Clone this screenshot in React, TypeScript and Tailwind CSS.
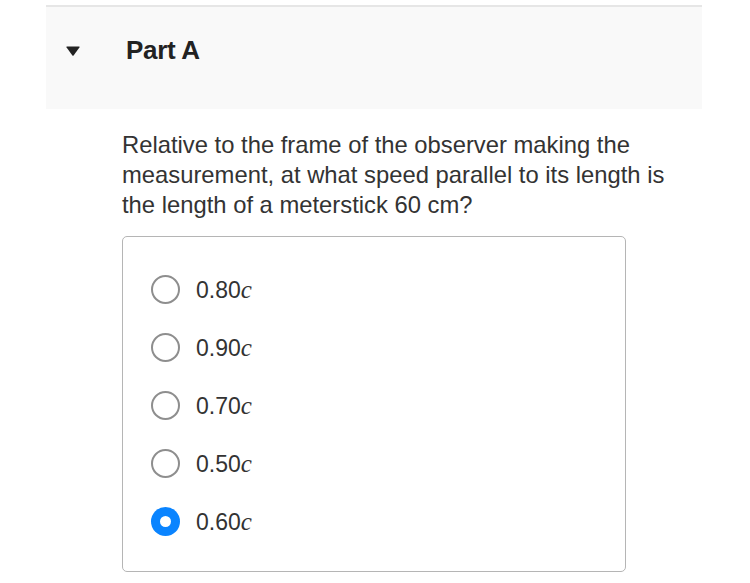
import React from 'react';

const options = ['0.80', '0.90', '0.70', '0.50', '0.60'];
const selected = 4;

function Radio({ checked }: { checked: boolean }) {
  if (checked) {
    return (
      <span className="flex h-[29px] w-[29px] shrink-0 items-center justify-center rounded-full bg-[#0a84ff]">
        <span className="h-[11px] w-[11px] rounded-full bg-white" />
      </span>
    );
  }
  return <span className="h-[29px] w-[29px] shrink-0 rounded-full border-[2.5px] border-[#8e8e8e] bg-white" />;
}

export default function App() {
  return (
    <div className="h-[583px] w-[750px] bg-white pt-[5px] text-[#222] [font-family:'Liberation_Sans',Arial,sans-serif]">
      <div className="ml-[46px] mr-[48px] border-t-2 border-[#e6e6e6] bg-[#f9f9f9]">
        <div className="flex h-[102px] items-center pb-[15px]">
          <svg className="ml-[20px] h-[10px] w-[14px]" viewBox="0 0 14 10">
            <path d="M1 0.5 H13 Q14 0.5 13.4 1.4 L7.6 9.4 Q7 10 6.4 9.4 L0.6 1.4 Q0 0.5 1 0.5 Z" fill="#222" />
          </svg>
          <span className="ml-[46px] text-[26px] font-bold tracking-[-0.3px]">Part A</span>
        </div>
      </div>

      <div className="ml-[122px] mt-[21px] w-[560px] text-[23.8px] leading-[30px] text-[#333]">
        Relative to the frame of the observer making the measurement, at what speed parallel to its length
        is the length of a meterstick 60 cm?
      </div>

      <div className="ml-[122px] mt-[16px] flex h-[336px] w-[504px] flex-col gap-[29px] rounded-[5px] border-[1.5px] border-[#b5b5b5] pl-[28px] pt-[38px]">
        {options.map((o, i) => (
          <label key={o} className="flex h-[29px] items-center gap-[16px]">
            <Radio checked={i === selected} />
            <span className="text-[23px] text-[#333]">
              {o}
              <span className="italic [font-family:'Liberation_Serif','Times_New_Roman',serif] text-[25px]">c</span>
            </span>
          </label>
        ))}
      </div>
    </div>
  );
}
